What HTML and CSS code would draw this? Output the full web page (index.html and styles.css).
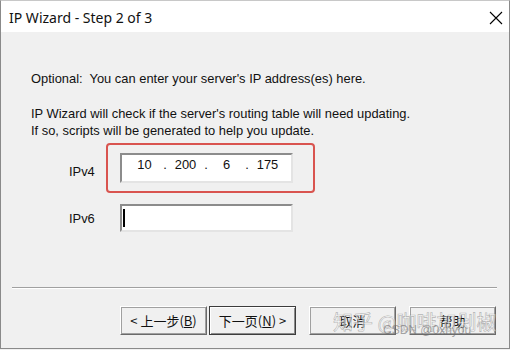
FILE: index.html
```html
<!DOCTYPE html>
<html>
<head>
    <title>IP Wizard - Step 2 of 3</title>
    <meta charset="utf-8">
    <link rel="stylesheet" href="styles.css">
</head>
<body>
    <div class="window">
        <div class="titlebar">
            <span class="title">IP Wizard - Step 2 of 3</span>
            <svg class="close" width="14" height="14" viewBox="0 0 14 14" stroke="#000" stroke-width="1.1">
                <path d="M 1 1 L 13 13 M 13 1 L 1 13"/>
            </svg>
        </div>
        <div class="content">
            <p class="intro">Optional:&nbsp; You can enter your server's IP address(es) here.</p>
            <p class="info">IP Wizard will check if the server's routing table will need updating.<br>If so, scripts will be generated to help you update.</p>

            <div class="fields">
                <div class="row">
                    <span class="label">IPv4</span>
                    <div class="highlight">
                        <div class="edit ipv4">
                            <span class="octet">10</span><span class="dot">.</span>
                            <span class="octet">200</span><span class="dot">.</span>
                            <span class="octet">6</span><span class="dot">.</span>
                            <span class="octet">175</span>
                        </div>
                    </div>
                </div>
                <div class="row">
                    <span class="label">IPv6</span>
                    <div class="edit ipv6"><span class="caret"></span></div>
                </div>
            </div>

            <div class="separator"></div>

            <div class="buttons">
                <button class="btn">&lt; 上一步(<u>B</u>)</button>
                <button class="btn default">下一页(<u>N</u>) &gt;</button>
                <button class="btn spaced">取消</button>
                <button class="btn spaced">帮助</button>
            </div>
        </div>

        <!-- watermark laid over the buttons -->
        <div class="watermark">
            <span class="wm-main">知乎 @咖啡加剁椒</span>
            <span class="wm-sub">CSDN @0xnyou</span>
        </div>
    </div>
</body>
</html>
```

FILE: styles.css
```css
html, body {
    margin: 0;
    padding: 0;
    background: #f0f0f0;
    overflow: hidden;
}

.window {
    position: relative;
    width: 508px;
    height: 347px;
    background: #f0f0f0;
    border: 1px solid #8a8a8a;
    border-top-color: #c8c8c8;
    font-family: "Liberation Sans", "Noto Sans CJK SC", sans-serif;
    font-size: 12.9px;
    color: #111;
    display: flex;
    flex-direction: column;
}

.titlebar {
    height: 31px;
    background: #fff;
    display: flex;
    align-items: center;
    justify-content: space-between;
    padding: 0 6px 0 8px;
}

.title {
    font-family: "Noto Sans", "Noto Sans CJK SC", sans-serif;
    font-size: 14px;
    color: #111;
    margin-top: 1px;
}

.close {
    margin-top: 2px;
}

.content {
    flex: 1;
    padding: 0 12px 0 11px;
}

.intro, .info {
    margin: 0 0 0 19px;
    line-height: 17px;
}

.intro {
    margin-top: 38px;
}

.info {
    margin-top: 18px;
}

.fields {
    margin: 4px 0 0 57px;
    display: flex;
    flex-direction: column;
    gap: 11px;
}

.row {
    display: flex;
    align-items: center;
}

.label {
    width: 37px;
}

.row:first-child .label {
    margin-top: 6px;
}

.highlight {
    border: 2px solid #d9544f;
    border-radius: 4px;
    padding: 8px 20px 8px 12px;
}

.edit {
    background: #fff;
    border-top: 2px solid #8c8c8c;
    border-left: 2px solid #8c8c8c;
    border-right: 2px solid #e4e4e4;
    border-bottom: 2px solid #e4e4e4;
}

.ipv4 {
    width: 163px;
    height: 26px;
    display: flex;
    align-items: flex-start;
    padding-left: 6px;
    line-height: 20px;
}

.ipv6 {
    width: 169px;
    height: 24px;
    margin-left: 14px;
    display: flex;
    align-items: center;
}

.octet {
    width: 33px;
    text-align: center;
}

.dot {
    width: 8px;
    text-align: center;
}

.caret {
    width: 2px;
    height: 18px;
    background: #000;
    margin-left: 1px;
}

.separator {
    margin-top: 55px;
    height: 1px;
    background: #a0a0a0;
    border-bottom: 1px solid #fff;
}

.buttons {
    display: flex;
    justify-content: flex-end;
    margin: 17px 1px 0 0;
}

.btn {
    width: 87px;
    height: 29px;
    background: #f0f0f0;
    font-family: "Noto Sans CJK SC", "Liberation Sans", sans-serif;
    font-size: 13px;
    color: #111;
    border: 1px solid;
    border-color: #fff #6a6a6a #6a6a6a #fff;
    box-shadow: 1px 1px 0 #a0a0a0 inset, -1px -1px 0 #a0a0a0 inset;
    padding: 0;
    margin-left: 2px;
}

.btn.spaced {
    margin-left: 13px;
}

.btn.default {
    border-color: #3c3c3c;
    box-shadow: 1px 1px 0 #fff inset, -1px -1px 0 #8a8a8a inset;
}

.watermark {
    position: absolute;
    left: 330px;
    top: 304px;
    width: 172px;
    height: 36px;
    pointer-events: none;
}

.wm-main {
    position: absolute;
    left: 2px;
    top: 2px;
    font-family: "Noto Sans CJK SC", sans-serif;
    font-size: 20px;
    color: rgba(255, 255, 255, 0.6);
    -webkit-text-stroke: 0.6px rgba(120, 120, 120, 0.55);
    white-space: nowrap;
}

.wm-sub {
    position: absolute;
    left: 52px;
    top: 18px;
    font-family: "Liberation Sans", sans-serif;
    font-size: 12px;
    color: rgba(110, 110, 110, 0.6);
    white-space: nowrap;
}
```
